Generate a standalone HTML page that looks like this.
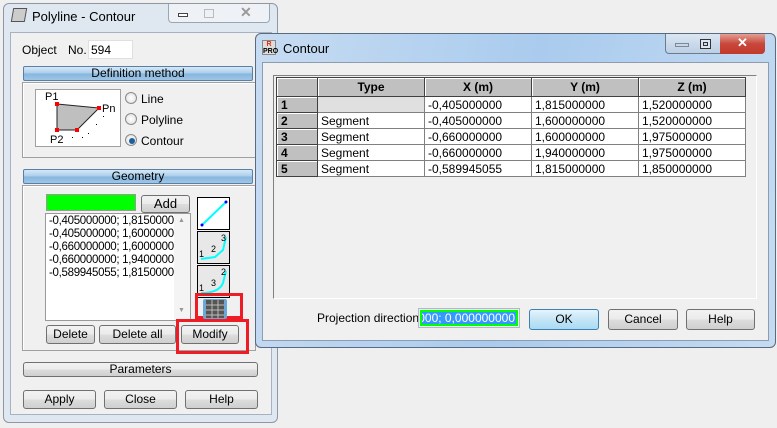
<!DOCTYPE html>
<html><head><meta charset="utf-8"><style>
*{box-sizing:border-box;margin:0;padding:0}
body{width:777px;height:428px;overflow:hidden;background:#efefef;font-family:"Liberation Sans",sans-serif;font-size:12px;color:#000;position:relative}
.a{position:absolute}
.btn{position:absolute;border:1px solid #707070;border-radius:3px;background:linear-gradient(#f2f2f2,#ebebeb 50%,#dddddd 51%,#cfcfcf);text-align:center;font-size:12px}
.bar{position:absolute;border:1px solid #5a7fa5;border-radius:2px;background:linear-gradient(#d5e8f8,#a9cdea 50%,#86b5dd 51%,#9fc6e6);text-align:center;font-size:12px;line-height:13px}
.grp{position:absolute;border:1px solid #a0a0a0;box-shadow:inset 1px 1px 0 #fff}
.radio{position:absolute;width:12px;height:12px;border-radius:50%;border:1px solid #8a8a8a;background:radial-gradient(#fff,#ddd)}
table{border-collapse:collapse;font-size:12px}
td{border:1px solid #808080;height:16px;padding:0 3px;line-height:14px;white-space:nowrap}
.h{background:#c0c0c0;font-weight:bold;text-align:center;border:1px solid #404040;box-shadow:inset 1px 1px 0 #fff}
.rh{background:#c0c0c0;font-weight:bold;border:1px solid #404040;box-shadow:inset 1px 1px 0 #fff;text-align:left;padding-left:4px}
</style></head><body>
<!-- left window -->
<div class="a" style="left:3px;top:3px;width:275px;height:420px;border:1px solid #8e98a4;border-radius:6px;background:#dfe8f1"></div>
<div class="a" style="left:12px;top:8px;width:14px;height:14px;border:1px solid #555;background:#ccc;transform:skewX(-10deg)"></div>
<div class="a" style="left:32px;top:9px;font-size:13px">Polyline - Contour</div>
<div class="a" style="left:168px;top:4px;width:102px;height:19px;border:1px solid #9aa6b4;border-top:none;border-radius:0 0 4px 4px;background:#eef2f6"></div>
<div class="a" style="left:178px;top:13px;width:10px;height:4px;border:1px solid #444;background:#fff"></div>
<div class="a" style="left:204px;top:9px;width:10px;height:9px;border:1px solid #bbb"></div>
<div class="a" style="left:240px;top:4px;font-size:14px;color:#999;font-weight:bold">✕</div>
<div class="a" style="left:10px;top:32px;width:262px;height:383px;background:#f0f0f0;border:1px solid #a6b2c0"></div>
<div class="a" style="left:22px;top:43px">Object</div>
<div class="a" style="left:68px;top:43px">No.</div>
<div class="a" style="left:88px;top:40px;width:45px;height:19px;background:#fff;border:1px solid #e0e0e0;padding:2px 2px;font-size:12px">594</div>
<div class="bar" style="left:23px;top:66px;width:230px;height:15px">Definition method</div>
<div class="grp" style="left:22px;top:82px;width:234px;height:76px"></div>
<div class="a" style="left:35px;top:89px;width:86px;height:58px;background:#fff;border:1px solid #a0a0a0"></div>
<svg class="a" style="left:35px;top:89px" width="86" height="58"><polygon points="22,15 64,19 42,41 22,41" fill="#bfbfbf" stroke="#222"/><rect x="20" y="13" width="4" height="4" fill="red"/><rect x="62" y="17" width="4" height="4" fill="red"/><rect x="20" y="39" width="4" height="4" fill="red"/><rect x="40" y="39" width="4" height="4" fill="red"/><text x="10" y="11" font-size="11" font-family="Liberation Sans">P1</text><text x="67" y="23" font-size="11" font-family="Liberation Sans">Pn</text><text x="15" y="54" font-size="11" font-family="Liberation Sans">P2</text><g fill="#000"><rect x="68" y="27" width="1" height="1"/><rect x="61" y="35" width="1" height="1"/><rect x="53" y="44" width="1" height="1"/><rect x="47" y="48" width="1" height="1"/><rect x="37" y="48" width="1" height="1"/></g></svg>
<div class="radio" style="left:125px;top:92px"></div><div class="a" style="left:141px;top:92px">Line</div>
<div class="radio" style="left:125px;top:113px"></div><div class="a" style="left:141px;top:113px">Polyline</div>
<div class="radio" style="left:125px;top:134px"></div><div class="a" style="left:129px;top:138px;width:6px;height:6px;border-radius:50%;background:#1d5f9a"></div><div class="a" style="left:141px;top:134px">Contour</div>
<div class="bar" style="left:23px;top:169px;width:230px;height:15px">Geometry</div>
<div class="grp" style="left:22px;top:185px;width:234px;height:166px"></div>
<div class="a" style="left:46px;top:194px;width:90px;height:17px;background:#00ff00;border:1px solid #999"></div>
<div class="btn" style="left:141px;top:195px;width:49px;height:18px;line-height:16px;font-size:13px">Add</div>
<div class="a" style="left:45px;top:213px;width:146px;height:108px;background:#fff;border:1px solid #999;padding:1px 3px;line-height:13px;font-size:11.5px;white-space:nowrap;overflow:hidden;letter-spacing:-0.3px">-0,405000000; 1,8150000<br>-0,405000000; 1,6000000<br>-0,660000000; 1,6000000<br>-0,660000000; 1,9400000<br>-0,589945055; 1,8150000</div>
<div class="a" style="left:174px;top:214px;width:16px;height:106px;background:#f4f4f4"></div>
<div class="a" style="left:178px;top:217px;font-size:7px;color:#999">▲</div>
<div class="a" style="left:178px;top:307px;font-size:7px;color:#999">▼</div>
<svg class="a" style="left:197px;top:197px" width="33" height="101">
<rect x="0.5" y="0.5" width="32" height="32" fill="#fff" stroke="#000"/><line x1="5" y1="28" x2="29" y2="5" stroke="#0ff" stroke-width="2"/><circle cx="5" cy="28" r="1.5" fill="#00f"/><circle cx="29" cy="5" r="1.5" fill="#00f"/>
<rect x="0.5" y="34.5" width="32" height="32" fill="#e8e8e8" stroke="#000"/><path d="M4,62 L18,60 L26,53 L29,40" stroke="#0ff" stroke-width="2" fill="none"/><text x="2" y="60" font-size="9">1</text><text x="14" y="55" font-size="9">2</text><text x="24" y="44" font-size="9">3</text>
<rect x="0.5" y="68.5" width="32" height="32" fill="#e8e8e8" stroke="#000"/><path d="M4,96 Q22,96 26,86 L29,74" stroke="#0ff" stroke-width="2" fill="none"/><text x="2" y="94" font-size="9">1</text><text x="14" y="89" font-size="9">3</text><text x="24" y="78" font-size="9">2</text>
</svg>
<div class="a" style="left:195px;top:293px;width:48px;height:26px;border:3px solid #ee1c25"></div>
<svg class="a" style="left:202px;top:299px" width="26" height="20"><rect x="1" y="0" width="24" height="20" rx="2" fill="#6aa8d8"/><rect x="4" y="1" width="18" height="18" fill="#555"/><g stroke="#bbb"><line x1="4" y1="6" x2="22" y2="6"/><line x1="4" y1="11" x2="22" y2="11"/><line x1="4" y1="16" x2="22" y2="16"/><line x1="10" y1="1" x2="10" y2="19"/><line x1="16" y1="1" x2="16" y2="19"/></g></svg>
<div class="a" style="left:176px;top:319px;width:73px;height:35px;border:3px solid #ee1c25"></div>
<div class="btn" style="left:46px;top:325px;width:49px;height:19px;line-height:17px">Delete</div>
<div class="btn" style="left:99px;top:325px;width:77px;height:19px;line-height:17px">Delete all</div>
<div class="btn" style="left:181px;top:325px;width:58px;height:19px;line-height:17px">Modify</div>
<div class="btn" style="left:23px;top:362px;width:235px;height:15px;line-height:13px">Parameters</div>
<div class="btn" style="left:23px;top:390px;width:73px;height:19px;line-height:17px">Apply</div>
<div class="btn" style="left:104px;top:390px;width:73px;height:19px;line-height:17px">Close</div>
<div class="btn" style="left:185px;top:390px;width:73px;height:19px;line-height:17px">Help</div>

<!-- right window -->
<div class="a" style="left:255px;top:33px;width:521px;height:315px;border:1px solid #5b6b7e;border-radius:6px;background:linear-gradient(100deg,#c7dcf2,#aacbee 50%,#c4dbf2)"></div>
<div class="a" style="left:262px;top:40px;width:14px;height:15px;background:#ddd;border:1px solid #888;font-size:7px;font-weight:bold;line-height:7px;text-align:center"><span style="color:#e03010">R</span><br>PRO</div>
<div class="a" style="left:283px;top:41px;font-size:13px">Contour</div>
<div class="a" style="left:665px;top:34px;width:100px;height:20px;border:1px solid #6b7c90;border-top:none;border-radius:0 0 4px 4px;background:linear-gradient(#dbe6f2,#bccfe4)"></div>
<div class="a" style="left:720px;top:34px;width:45px;height:20px;border-radius:0 0 4px 0;background:linear-gradient(#e3a093,#c7463a 50%,#c23a2c);color:#fff;font-weight:bold;text-align:center;font-size:13px;line-height:18px">✕</div>
<div class="a" style="left:675px;top:43px;width:14px;height:4px;border:1px solid #7788a0;background:#cdd6e0"></div>
<div class="a" style="left:700px;top:39px;width:11px;height:10px;border:1px solid #333;box-shadow:inset 0 0 0 2px #dbe6f2,inset 0 0 0 3px #333"></div>
<div class="a" style="left:262px;top:62px;width:507px;height:279px;background:#f0f0f0;border:1px solid #8e9cad"></div>
<div class="a" style="left:273px;top:75px;width:484px;height:224px;border:1px solid #808080;border-right-color:#fff;border-bottom-color:#fff;background:#f0f0f0"></div>
<table class="a" style="left:276px;top:77px">
<tr><td class="h" style="width:41px;height:19px"></td><td class="h" style="width:107px">Type</td><td class="h" style="width:107px">X (m)</td><td class="h" style="width:107px">Y (m)</td><td class="h" style="width:107px">Z (m)</td></tr>
<tr><td class="rh">1</td><td style="background:#e0e0e0"></td><td style="background:#fff">-0,405000000</td><td style="background:#fff">1,815000000</td><td style="background:#fff">1,520000000</td></tr>
<tr><td class="rh">2</td><td style="background:#fff">Segment</td><td style="background:#fff">-0,405000000</td><td style="background:#fff">1,600000000</td><td style="background:#fff">1,520000000</td></tr>
<tr><td class="rh">3</td><td style="background:#fff">Segment</td><td style="background:#fff">-0,660000000</td><td style="background:#fff">1,600000000</td><td style="background:#fff">1,975000000</td></tr>
<tr><td class="rh">4</td><td style="background:#fff">Segment</td><td style="background:#fff">-0,660000000</td><td style="background:#fff">1,940000000</td><td style="background:#fff">1,975000000</td></tr>
<tr><td class="rh">5</td><td style="background:#fff">Segment</td><td style="background:#fff">-0,589945055</td><td style="background:#fff">1,815000000</td><td style="background:#fff">1,850000000</td></tr>
</table>
<div class="a" style="left:317px;top:311px">Projection direction</div>
<div class="a" style="left:418px;top:308px;width:102px;height:20px;border:1px solid #abc;padding:1px"><div style="position:relative;width:100%;height:100%;border:2px solid #00ff00;background:#3399ff;overflow:hidden"><span style="position:absolute;right:1px;top:0;color:#fff;font-size:12px;line-height:13px;white-space:nowrap">00000; 0,000000000</span></div></div>
<div class="btn" style="left:529px;top:309px;width:70px;height:21px;line-height:19px;border-color:#3c7fb1;background:linear-gradient(#e5f4fc,#c4e5f6 50%,#a9daf3)">OK</div>
<div class="btn" style="left:608px;top:309px;width:70px;height:21px;line-height:19px">Cancel</div>
<div class="btn" style="left:686px;top:309px;width:69px;height:21px;line-height:19px">Help</div>
</body></html>
